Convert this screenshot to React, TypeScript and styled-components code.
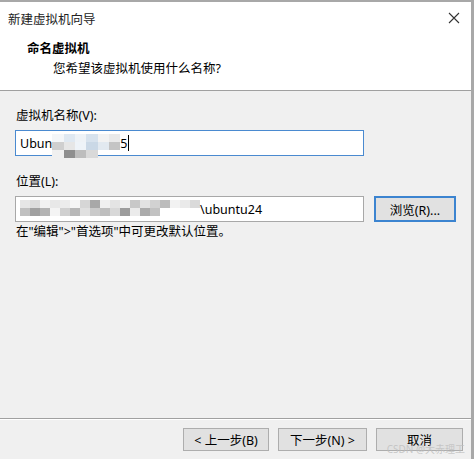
import { FC } from 'react';
import styled, { createGlobalStyle } from 'styled-components';

const Global = createGlobalStyle`
  html, body {
    margin: 0;
    padding: 0;
    background: #f0f0f0;
  }
  body {
    font-family: "Noto Sans", "Noto Sans CJK SC", sans-serif;
    font-size: 12px;
    color: #000;
  }
`;

const nameBlocks = [
  '#f4f6f8', '#dfe8f1', '#eef2f6', '#d7e2ed', '#f2f2f2', '#e9e9e9', '#cfcfcf', '#e6e6e6',
  '#eef3f8', '#cad8e6', '#e2e9f0', '#c4c4c4', '#f0f0f0', '#8f8f8f', '#bdbdbd', '#d9d9d9',
];
const pathBlocks = [
  '#e6e6e6', '#dcdcdc', '#f2f2f2', '#e8e8e8', '#ececec', '#f6f6f6', '#d6d6d6', '#a8a8a8',
  '#f0f0f0', '#e4e4e4', '#eeeeee', '#c8c8c8', '#e2e2e2', '#d2d2d2', '#bcbcbc', '#f2f2f2',
  '#eaeaea', '#dadada', '#c0c0c0', '#a0a0a0', '#b4b4b4', '#f4f4f4', '#d0d0d0', '#b8b8b8',
  '#e0e0e0', '#cacaca', '#bebebe', '#d8d8d8', '#9c9c9c', '#ebebeb', '#ababab', '#c2c2c2',
];

const App: FC = () => {
  return (
    <>
      <Global />
      <Window>
        <Header>
          <TitleBar>
            <Title>新建虚拟机向导</Title>
            <Close>
              <svg width="12" height="12" viewBox="0 0 12 12">
                <path d="M1 1L11 11M11 1L1 11" stroke="#333" strokeWidth="1.1" />
              </svg>
            </Close>
          </TitleBar>
          <Heading>命名虚拟机</Heading>
          <SubHeading>您希望该虚拟机使用什么名称?</SubHeading>
        </Header>
        <Body>
          <Label>虚拟机名称(V):</Label>
          <Field $focused>
            <span>Ubun</span>
            <Mosaic $width={68}>
              {nameBlocks.map((c, i) => (
                <Block key={i} style={{ background: c }} />
              ))}
            </Mosaic>
            <span>5</span>
            <Caret />
          </Field>
          <Label $top={17}>位置(L):</Label>
          <Row>
            <Field>
              <Mosaic $width={180}>
                {pathBlocks.map((c, i) => (
                  <Block key={i} style={{ background: c }} />
                ))}
              </Mosaic>
              <span>\ubuntu24</span>
            </Field>
            <Button $primary $width={82}>浏览(R)...</Button>
          </Row>
          <Hint>在"编辑"&gt;"首选项"中可更改默认位置。</Hint>
        </Body>
        <Footer>
          <Button $width={86} $height={23}>&lt; 上一步(B)</Button>
          <Button $width={89} $height={23}>下一步(N) &gt;</Button>
          <Button $width={87} $height={23}>取消</Button>
        </Footer>
        <Watermark>CSDN @大赤理工</Watermark>
      </Window>
    </>
  );
};

export default App;

const Window = styled.div`
  position: relative;
  width: 471px;
  height: 457px;
  border-top: 2px solid #a8a8a8;
  border-right: 3px solid #a8a8a8;
  background: #f0f0f0;
  display: flex;
  flex-direction: column;
`;

const Header = styled.div`
  background: #fff;
  height: 89px;
  border-bottom: 1px solid #a0a0a0;
  box-sizing: border-box;
`;

const TitleBar = styled.div`
  display: flex;
  align-items: center;
  justify-content: space-between;
  height: 32px;
  padding: 0 11px 0 8px;
`;

const Title = styled.div`
  font-size: 12.5px;
  color: #222;
`;

const Close = styled.div`
  display: flex;
  align-items: center;
`;

const Heading = styled.div`
  font-weight: bold;
  font-size: 12.5px;
  margin: 6px 0 0 27px;
  line-height: 18px;
`;

const SubHeading = styled.div`
  font-size: 12.5px;
  margin: 2px 0 0 53px;
  line-height: 18px;
`;

const Body = styled.div`
  flex: 1;
  padding: 16px 0 0 15px;
  border-bottom: 1px solid #a0a0a0;
  box-shadow: 0 1px 0 #fff;
`;

const Label = styled.div<{ $top?: number }>`
  font-size: 12.5px;
  line-height: 18px;
  margin: ${(p) => p.$top ?? 0}px 0 5px 1px;
`;

const Row = styled.div`
  display: flex;
  align-items: center;
  gap: 10px;
`;

const Field = styled.div<{ $focused?: boolean }>`
  width: 349px;
  height: 26px;
  box-sizing: border-box;
  background: #fff;
  border: 1px solid ${(p) => (p.$focused ? '#4a8ad0' : '#a8a8a8')};
  display: flex;
  align-items: center;
  padding-left: 4px;
  font-size: 12.5px;
`;

const Mosaic = styled.div<{ $width: number }>`
  display: grid;
  grid-template-columns: repeat(auto-fill, minmax(10px, 1fr));
  grid-auto-rows: 8px;
  align-self: stretch;
  margin: 3px 0;
  width: ${(p) => p.$width}px;
  flex-shrink: 0;
`;

const Block = styled.div`
  width: 100%;
  height: 100%;
`;

const Caret = styled.div`
  width: 1px;
  height: 16px;
  background: #000;
  margin-left: 1px;
`;

const Button = styled.button<{ $primary?: boolean; $width: number; $height?: number }>`
  width: ${(p) => p.$width}px;
  height: ${(p) => p.$height ?? 26}px;
  box-sizing: border-box;
  margin: 0;
  background: #e1e1e1;
  border: ${(p) => (p.$primary ? '2px solid #3c84d0' : '1px solid #adadad')};
  font-family: "Noto Sans", "Noto Sans CJK SC", sans-serif;
  font-size: 12.5px;
  color: #000;
  padding: 0;
`;

const Hint = styled.div`
  font-size: 12.5px;
  margin: 1px 0 0 1px;
  line-height: 18px;
`;

const Footer = styled.div`
  height: 40px;
  display: flex;
  justify-content: flex-end;
  align-items: center;
  gap: 9px;
  padding-right: 8px;
`;

const Watermark = styled.div`
  position: absolute;
  right: 6px;
  bottom: 3px;
  font-size: 10px;
  color: rgba(190, 190, 190, 0.8);
`;
